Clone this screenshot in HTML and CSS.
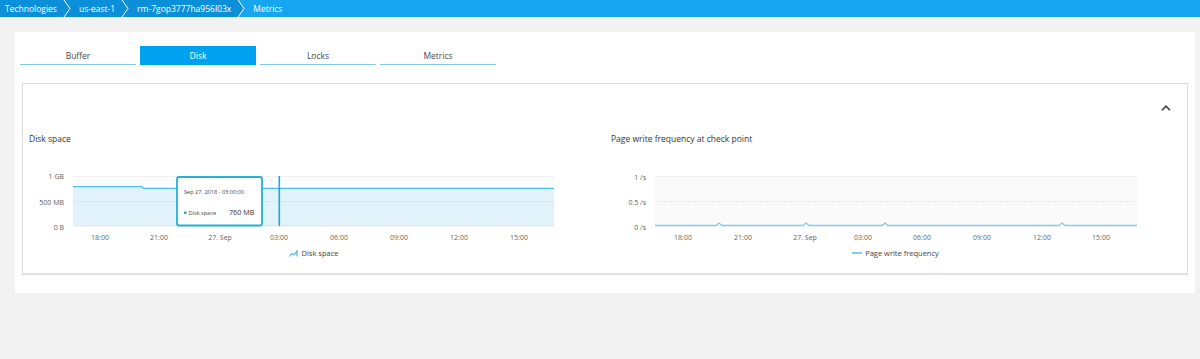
FILE: index.html
```html
<!DOCTYPE html>
<html>
<head>
<meta charset="utf-8">
<link rel="stylesheet" href="styles.css">
</head>
<body>
<nav class="topbar">
  <span class="crumb dark first">Technologies</span>
  <svg class="sep dark" width="8" height="17" viewBox="0 0 8 17"><polygon points="0,0 1,0 7,8.5 1,17 0,17" class="sep-fill"/><polyline points="1,0 7,8.5 1,17" fill="none" stroke="#fff" stroke-width="1"/></svg>
  <span class="crumb dark">us-east-1</span>
  <svg class="sep dark" width="8" height="17" viewBox="0 0 8 17"><polygon points="0,0 1,0 7,8.5 1,17 0,17" class="sep-fill"/><polyline points="1,0 7,8.5 1,17" fill="none" stroke="#fff" stroke-width="1"/></svg>
  <span class="crumb dark">rm-7gop3777ha956l03x</span>
  <svg class="sep" width="8" height="17" viewBox="0 0 8 17"><polygon points="0,0 1,0 7,8.5 1,17 0,17" class="sep-fill"/><polyline points="1,0 7,8.5 1,17" fill="none" stroke="#fff" stroke-width="1"/></svg>
  <span class="crumb">Metrics</span>
</nav>

<main class="panel">
  <div class="tabs">
    <div class="tab">Buffer</div>
    <div class="tab active">Disk</div>
    <div class="tab">Locks</div>
    <div class="tab">Metrics</div>
  </div>

  <section class="card">
    <div class="card-head">
      <svg class="collapse" width="10" height="6" viewBox="0 0 10 6"><polyline points="1,5.2 5,1.2 9,5.2" fill="none" stroke="#3d3d4a" stroke-width="1.6"/></svg>
    </div>
    <div class="charts">
      <div class="chart">
        <div class="chart-title">Disk space</div>
        <svg class="plot" width="540" height="79" viewBox="0 0 540 79">
          <rect x="44" y="8" width="481" height="50" fill="#fbfcfd"/>
          <line x1="44" y1="8.5" x2="525" y2="8.5" stroke="#f0f0f0"/>
          <polygon points="44,18.7 113,18.7 113,20.3 525,20.3 525,58 44,58" fill="#e1f2fb"/>
          <line x1="44" y1="33.5" x2="525" y2="33.5" stroke="#d5e8f2"/>
          <polyline points="44,18.7 113,18.7 114,20.3 525,20.3" fill="none" stroke="#4cbdec" stroke-width="1.3"/>
          <line x1="44" y1="58" x2="525" y2="58" stroke="#e5e5e5"/>
          <text x="35" y="11" class="ylab">1 GB</text>
          <text x="35" y="36.5" class="ylab">500 MB</text>
          <text x="35" y="62" class="ylab">0 B</text>
          <g class="xlab">
            <text x="71" y="72">18:00</text>
            <text x="130" y="72">21:00</text>
            <text x="191" y="72">27. Sep</text>
            <text x="250" y="72">03:00</text>
            <text x="310" y="72">06:00</text>
            <text x="370" y="72">09:00</text>
            <text x="430" y="72">12:00</text>
            <text x="490" y="72">15:00</text>
          </g>
          <line x1="250.3" y1="8" x2="250.3" y2="58" stroke="#1ba9d6" stroke-width="1.6"/>
          <rect x="148" y="9" width="85" height="48.5" rx="2" fill="#fff" stroke="#22b3d6" stroke-width="1.8"/>
          <text x="155" y="26" class="tt-date">Sep 27, 2018 - 03:00:00</text>
          <rect x="155" y="43.5" width="2.6" height="2.6" fill="#2aa8e0"/>
          <text x="159.5" y="46.5" class="tt-name">Disk space</text>
          <text x="200" y="47" class="tt-val">760 MB</text>
        </svg>
        <div class="legend">
          <svg width="10" height="7" viewBox="0 0 10 7"><polyline points="0.5,6.5 3,3.5 5,5 8,1 8,6.5" fill="none" stroke="#3fb3e6" stroke-width="1.1"/></svg>
          <span>Disk space</span>
        </div>
      </div>
      <div class="chart">
        <div class="chart-title">Page write frequency at check point</div>
        <svg class="plot" width="540" height="79" viewBox="0 0 540 79">
          <rect x="44" y="8" width="482" height="50" fill="#fafafa"/>
          <line x1="44" y1="8.5" x2="526" y2="8.5" stroke="#f0f0f0"/>
          <line x1="44" y1="33.5" x2="526" y2="33.5" stroke="#eaeaea" stroke-dasharray="2 1"/>
          <polyline points="44,57.5 105,57.5 108,55 111,57.5 192,57.5 195,55 198,57.5 271,57.5 274,55 277,57.5 448,57.5 451,55 454,57.5 526,57.5" fill="none" stroke="#7fcbf0" stroke-width="1.3"/>
          <text x="35" y="11.5" class="ylab">1 /s</text>
          <text x="35" y="37" class="ylab">0.5 /s</text>
          <text x="35" y="62" class="ylab">0 /s</text>
          <g class="xlab">
            <text x="72" y="72">18:00</text>
            <text x="132" y="72">21:00</text>
            <text x="194" y="72">27. Sep</text>
            <text x="252" y="72">03:00</text>
            <text x="311" y="72">06:00</text>
            <text x="371" y="72">09:00</text>
            <text x="431" y="72">12:00</text>
            <text x="490" y="72">15:00</text>
          </g>
        </svg>
        <div class="legend">
          <span class="legend-line"></span>
          <span>Page write frequency</span>
        </div>
      </div>
    </div>
  </section>
</main>
</body>
</html>
```

FILE: styles.css
```css
* { box-sizing: border-box; }

body {
  margin: 0;
  background: #f2f2f2;
  font-family: "Open Sans", "Noto Sans", sans-serif;
  color: #333;
}

.topbar {
  display: flex;
  align-items: center;
  height: 17px;
  background: #16a6ef;
  color: #fff;
  font-size: 8.5px;
}

.crumb {
  display: flex;
  align-items: center;
  height: 17px;
  padding: 0 6px 0 8px;
  white-space: nowrap;
}

.crumb.first { padding-left: 5px; }

.crumb.dark { background: #0b8fd9; }

.sep { display: block; flex: none; }
.sep.dark { background: #0b8fd9; }
.sep .sep-fill { fill: #0b8fd9; }

.panel {
  width: 1180px;
  margin: 15px 0 0 15px;
  background: #fff;
  padding: 14px 0 19px 0;
}

.tabs {
  display: flex;
  gap: 4px;
  padding-left: 5px;
}

.tab {
  width: 116px;
  height: 19px;
  display: flex;
  align-items: center;
  justify-content: center;
  font-size: 8.5px;
  color: #484848;
  border-bottom: 1px solid #86c8ec;
}

.tab.active {
  background: #00a1f1;
  color: #fff;
  border-bottom-color: #00a1f1;
}

.card {
  margin: 18px 7px 0 7px;
  height: 191px;
  border: 1px solid #dcdcdc;
  box-shadow: 0 1px 1px #e6e6e6;
}

.card-head {
  height: 48px;
  display: flex;
  align-items: center;
  justify-content: flex-end;
  padding-right: 16px;
}

.collapse { display: block; }

.charts {
  display: grid;
  grid-template-columns: 582px 1fr;
  padding-left: 6px;
}

.chart-title {
  font-size: 8.5px;
  line-height: 14px;
  color: #353535;
}

.plot {
  display: block;
  margin-top: 22px;
}

.ylab {
  font-size: 7px;
  fill: #606060;
  text-anchor: end;
  font-family: "Open Sans", "Noto Sans", sans-serif;
}

.xlab text {
  font-size: 7px;
  fill: #666666;
  text-anchor: middle;
  font-family: "Open Sans", "Noto Sans", sans-serif;
}

.tt-date, .tt-name {
  font-size: 5.6px;
  fill: #454545;
  font-family: "Open Sans", "Noto Sans", sans-serif;
}

.tt-val {
  font-size: 7.2px;
  fill: #333;
  font-family: "Open Sans", "Noto Sans", sans-serif;
}

.legend {
  width: 481px;
  margin-left: 44px;
  height: 12px;
  display: flex;
  align-items: center;
  justify-content: center;
  gap: 3px;
  font-size: 7.5px;
  color: #444;
}

.legend svg { display: block; }

.legend-line {
  width: 10px;
  height: 1.5px;
  background: #7fcbf0;
}
```
